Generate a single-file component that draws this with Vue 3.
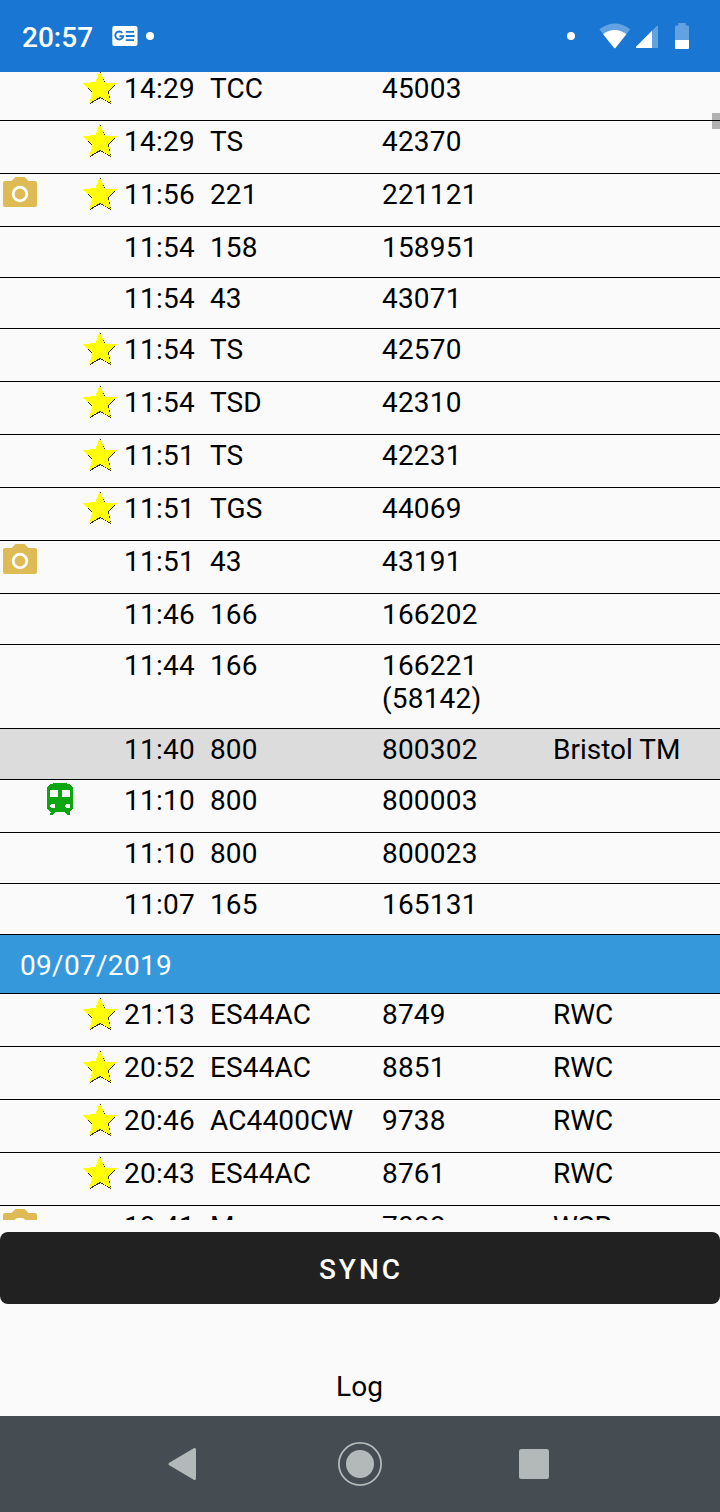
<script setup>
const rows = [
  { star: true, time: '14:29', cls: 'TCC', num: '45003' },
  { star: true, time: '14:29', cls: 'TS', num: '42370' },
  { camera: true, star: true, time: '11:56', cls: '221', num: '221121' },
  { time: '11:54', cls: '158', num: '158951' },
  { time: '11:54', cls: '43', num: '43071' },
  { star: true, time: '11:54', cls: 'TS', num: '42570' },
  { star: true, time: '11:54', cls: 'TSD', num: '42310' },
  { star: true, time: '11:51', cls: 'TS', num: '42231' },
  { star: true, time: '11:51', cls: 'TGS', num: '44069' },
  { camera: true, time: '11:51', cls: '43', num: '43191' },
  { time: '11:46', cls: '166', num: '166202' },
  { time: '11:44', cls: '166', num: '166221', alt: '(58142)' },
  { time: '11:40', cls: '800', num: '800302', place: 'Bristol TM', selected: true },
  { train: true, time: '11:10', cls: '800', num: '800003' },
  { time: '11:10', cls: '800', num: '800023' },
  { time: '11:07', cls: '165', num: '165131' },
  { header: '09/07/2019' },
  { star: true, time: '21:13', cls: 'ES44AC', num: '8749', place: 'RWC' },
  { star: true, time: '20:52', cls: 'ES44AC', num: '8851', place: 'RWC' },
  { star: true, time: '20:46', cls: 'AC4400CW', num: '9738', place: 'RWC' },
  { star: true, time: '20:43', cls: 'ES44AC', num: '8761', place: 'RWC' },
  { camera: true, time: '19:41', cls: 'M', num: '7088', place: 'WSR' },
]
</script>

<template>
  <div class="screen">
    <header class="status">
      <span class="clock">20:57</span>
      <svg class="news" width="26" height="20" viewBox="0 0 26 20">
        <rect x=".3" width="25.2" height="20" rx="2" fill="#fff" />
        <path d="M10.3 6.8A4 4 0 1 0 11.2 10.3H7.4" fill="none" stroke="#1976d2" stroke-width="1.9" />
        <path d="M13.8 5.9H22M13.8 10H22.6M13.8 14.1H22" stroke="#1976d2" stroke-width="1.8" />
      </svg>
      <i class="dot"></i>
      <span class="grow"></span>
      <i class="dot"></i>
      <svg class="wifi" width="32" height="26" viewBox="0 0 32 26">
        <path d="M.3 6.3Q16-5.4 31.2 6.3L16.5 25.2H15.5Z" fill="#fff" fill-opacity=".32" />
        <path d="M4.1 11.2Q15.7 2.8 27.3 11.2L16.3 24.9Q15.7 25.4 15.1 24.9Z" fill="#fff" />
      </svg>
      <svg class="signal" width="22" height="22" viewBox="0 0 22 22">
        <path d="M0 22V20.8L20.8 0H22V22Z" fill="#fff" fill-opacity=".32" />
        <path d="M.6 22Q-.4 21.6.3 20.6L16 4.8V22Z" fill="#fff" />
      </svg>
      <svg class="battery" width="14" height="26" viewBox="0 0 14 26">
        <path d="M3.3 0H10.7V2.6H13Q14 2.6 14 3.6V17H0V3.6Q0 2.6 1 2.6H3.3Z" fill="#fff" fill-opacity=".32" />
        <path d="M0 17H14V25Q14 26 13 26H1Q0 26 0 25Z" fill="#fff" />
      </svg>
    </header>

    <main class="list">
      <div class="rows">
        <template v-for="(r, i) in rows" :key="i">
          <div v-if="r.header" class="day">{{ r.header }}</div>
          <div v-else class="row" :class="{ selected: r.selected }">
            <span class="icon">
              <svg v-if="r.camera" width="40" height="40" viewBox="0 0 40 40">
                <path
                  d="M5 7H11.5L15.5 3H24.5L28.5 7H35Q37 7 37 9V31Q37 33 35 33H5Q3 33 3 31V9Q3 7 5 7Z"
                  fill="#dfbb55"
                />
                <circle cx="20" cy="20" r="6.8" fill="none" stroke="#fff" stroke-width="2.8" />
              </svg>
            </span>
            <span class="icon">
              <svg v-if="r.train" width="40" height="40" viewBox="0 0 40 40" shape-rendering="crispEdges">
                <path
                  fill="#0ba50f"
                  fill-rule="evenodd"
                  d="M14 3H26L31 5L33 8V28L32 30L29 32L30 33V35H27L25 32H15L13 35H10V33L11 32L8 30L7 28V8L9 5ZM10 10V17H18V10ZM22 10V17H30V10ZM11 24L10 25V27L11 28H14L15 27V25L14 24ZM26 24L25 25V27L26 28H29L30 27V25L29 24Z"
                />
              </svg>
            </span>
            <span class="icon">
              <svg v-if="r.star" width="40" height="40" viewBox="0 0 40 40" shape-rendering="crispEdges">
                <path
                  d="M20 3L25 14.6L37 16L28.8 24L31.2 36.1L20.5 30L9.8 36.2L12.6 25L4 16.6L16 14Z"
                  fill="#333"
                />
                <path
                  d="M19.7 2.6L24.6 14.4L36.8 15.3L28 23.6L30.8 35L20 29L9.2 35.4L12.4 24L3 15.4L15.6 13.8Z"
                  fill="#ff0"
                />
              </svg>
            </span>
            <span class="text time">{{ r.time }}</span>
            <span class="text cls">{{ r.cls }}</span>
            <span class="text num">{{ r.num }}<template v-if="r.alt"><br />{{ r.alt }}</template></span>
            <span class="text place">{{ r.place }}</span>
          </div>
        </template>
      </div>
      <i class="thumb"></i>
    </main>

    <div class="actions">
      <button class="sync">SYNC</button>
    </div>
    <div class="log">Log</div>

    <nav class="nav">
      <svg width="30" height="36" viewBox="0 0 30 36">
        <path d="M27.5 3.5V32.5L3 18Z" fill="#b3b8b9" stroke="#b3b8b9" stroke-width="3" stroke-linejoin="round" />
      </svg>
      <svg class="home" width="44" height="44" viewBox="0 0 44 44">
        <circle cx="22" cy="22" r="21.1" fill="none" stroke="#b3b8b9" stroke-width="1.8" />
        <circle cx="22" cy="22" r="14" fill="#b3b8b9" />
      </svg>
      <svg width="30" height="30" viewBox="0 0 30 30">
        <rect width="30" height="30" rx="2.5" fill="#b3b8b9" />
      </svg>
    </nav>
  </div>
</template>

<style>
body {
  margin: 0;
}
</style>

<style scoped>
.screen {
  width: 720px;
  height: 1512px;
  display: flex;
  flex-direction: column;
  background: #fafafa;
  color: #000;
  font-family: Roboto, sans-serif;
  font-size: 28px;
  line-height: 33px;
  overflow: hidden;
}
svg {
  display: block;
  flex: none;
}
.status {
  box-sizing: border-box;
  height: 72px;
  flex: none;
  display: flex;
  align-items: center;
  padding: 0 31px 0 22px;
  background: #1976d2;
  color: #fff;
}
.clock {
  width: 90px;
  font-weight: 500;
  padding-top: 2px;
}
.dot {
  width: 8px;
  height: 8px;
  border-radius: 50%;
  background: #fff;
}
.news {
  margin-right: 8px;
}
.grow {
  flex: 1;
}
.wifi {
  margin-left: 24px;
}
.signal {
  margin: 2px 17px 0 5px;
}
.list {
  position: relative;
  height: 1148px;
  flex: none;
  overflow: hidden;
}
.rows {
  margin-top: -4px;
}
.row {
  box-sizing: border-box;
  display: grid;
  grid-template-columns: 40px 40px 40px 90px 172px 171px 1fr;
  align-items: start;
  min-height: 51px;
  padding-bottom: 12px;
  border-bottom: 1px solid #000;
}
.row.selected {
  background: #dcdcdc;
}
.text {
  padding-top: 4px;
  padding-bottom: 1px;
  white-space: nowrap;
}
.time {
  padding-left: 4px;
  letter-spacing: 0.25px;
}
.cls {
  letter-spacing: 0.12px;
}
.num {
  letter-spacing: 0.2px;
}
.day {
  box-sizing: border-box;
  height: 59px;
  padding: 14px 20px;
  background: #3498db;
  border-bottom: 1px solid #000;
  color: #fff;
  letter-spacing: 0.3px;
}
.thumb {
  position: absolute;
  right: 0;
  top: 41px;
  width: 8px;
  height: 16px;
  background: rgba(0, 0, 0, 0.29);
}
.actions {
  padding-top: 12px;
  flex: none;
}
.sync {
  display: block;
  width: 100%;
  height: 72px;
  padding: 2px 0 0 2px;
  border: 0;
  border-radius: 8px;
  background: #212121;
  color: #fff;
  font: 500 28px/33px Roboto, sans-serif;
  letter-spacing: 3px;
}
.log {
  flex: 1;
  padding: 66px 1px 0 0;
  text-align: center;
}
.nav {
  height: 96px;
  flex: none;
  box-sizing: border-box;
  display: flex;
  align-items: center;
  padding-left: 167px;
  background: #454d53;
}
.home {
  margin: 0 137px 0 141px;
}
</style>
